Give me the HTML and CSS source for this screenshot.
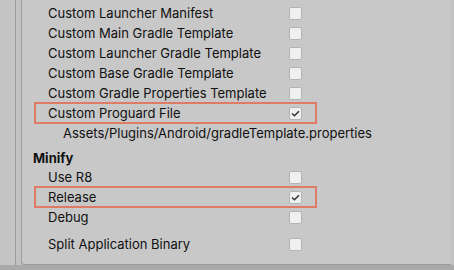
FILE: index.html
```html
<!DOCTYPE html>
<html>
<head>
  <title>Publishing Settings</title>
  <link rel="stylesheet" href="styles.css">
</head>
<body>
  <div class="frame">
    <div class="gutter"></div>
    <div class="panel">
      <div class="row"><span class="label">Custom Launcher Manifest</span><span class="check"></span></div>
      <div class="row"><span class="label">Custom Main Gradle Template</span><span class="check"></span></div>
      <div class="row"><span class="label">Custom Launcher Gradle Template</span><span class="check"></span></div>
      <div class="row"><span class="label">Custom Base Gradle Template</span><span class="check"></span></div>
      <div class="row"><span class="label">Custom Gradle Properties Template</span><span class="check"></span></div>
      <div class="row marked">
        <span class="label">Custom Proguard File</span>
        <span class="check on">
          <svg width="9" height="7" viewBox="0 0 9 7"><path d="M1 3.5 L3.4 5.8 L8 1.2" fill="none" stroke="#333" stroke-width="1.5"/></svg>
        </span>
      </div>
      <div class="path">Assets/Plugins/Android/gradleTemplate.properties</div>

      <div class="heading">Minify</div>
      <div class="row"><span class="label">Use R8</span><span class="check"></span></div>
      <div class="row marked">
        <span class="label">Release</span>
        <span class="check on">
          <svg width="9" height="7" viewBox="0 0 9 7"><path d="M1 3.5 L3.4 5.8 L8 1.2" fill="none" stroke="#333" stroke-width="1.5"/></svg>
        </span>
      </div>
      <div class="row"><span class="label">Debug</span><span class="check"></span></div>
      <div class="row split"><span class="label">Split Application Binary</span><span class="check"></span></div>
    </div>
  </div>
  <div class="footer"></div>
</body>
</html>
```

FILE: styles.css
```css
body {
  margin: 0;
  width: 454px;
  height: 270px;
  overflow: hidden;
  background: #c2c2c2;
  font-family: Inter, "Noto Sans", sans-serif;
  font-size: 13px;
  color: #101010;
}

.frame {
  display: flex;
  height: 265px;
}

.gutter {
  width: 15px;
  border-right: 1px solid #9a9a9a;
  background: #c4c4c4;
}

.panel {
  flex: 1;
  margin-left: 5px;
  margin-right: 3px;
  padding-top: 3px;
  background: #c8c8c8;
  border-left: 1px solid #9c9c9c;
  border-bottom: 1px solid #9c9c9c;
  border-bottom-left-radius: 3px;
  box-sizing: border-box;
}

.row {
  display: flex;
  align-items: center;
  height: 20px;
  width: 281px;
  margin-left: 13px;
  padding-left: 13px;
  box-sizing: border-box;
}

.label {
  width: 241px;
  white-space: nowrap;
}

.check {
  width: 13px;
  height: 13px;
  box-sizing: border-box;
  border: 1px solid #b4b4b4;
  border-radius: 2px;
  background: #f0f0f0;
  display: flex;
  align-items: center;
  justify-content: center;
}

.marked {
  outline: 2px solid #df7a66;
  outline-offset: -1px;
}

.path {
  height: 20px;
  line-height: 20px;
  padding-left: 41px;
}

.heading {
  font-weight: bold;
  margin-top: 6px;
  height: 18px;
  line-height: 18px;
  padding-left: 11px;
}

.split {
  margin-top: 7px;
}

.footer {
  height: 5px;
  background: #a9a9a9;
  border-top: 0;
}
```
